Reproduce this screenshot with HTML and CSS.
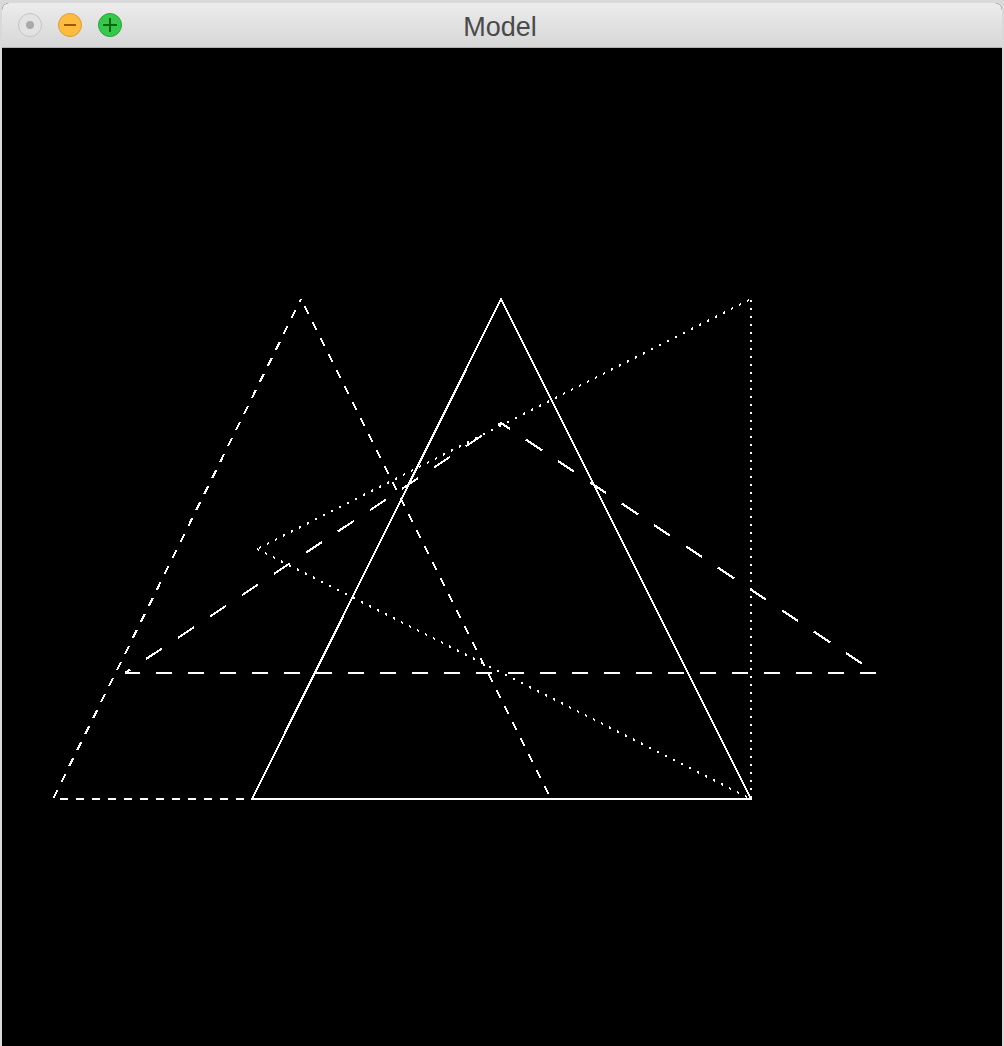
FILE: index.html
```html
<!DOCTYPE html>
<html lang="en">
<head>
<meta charset="utf-8">
<title>Model</title>
<link rel="stylesheet" href="styles.css">
</head>
<body>
<div class="window">
  <div class="titlebar">
    <div class="lights">
      <span class="light light-close">
        <svg viewBox="0 0 24 24" width="24" height="24"><circle cx="12" cy="12" r="4" fill="#a9a9a9"/></svg>
      </span>
      <span class="light light-min">
        <svg viewBox="0 0 24 24" width="24" height="24"><rect x="6" y="11" width="12" height="2" fill="#9a5a00"/></svg>
      </span>
      <span class="light light-max">
        <svg viewBox="0 0 24 24" width="24" height="24"><rect x="5" y="11" width="14" height="2" fill="#0d650f"/><rect x="11" y="5" width="2" height="14" fill="#0d650f"/></svg>
      </span>
    </div>
    <div class="title">Model</div>
    <div class="spacer"></div>
  </div>
  <div class="canvas">
    <svg class="scene" width="1000" height="998" viewBox="2 48 1000 998" shape-rendering="crispEdges">
      <g stroke="#ffffff" stroke-width="2" fill="none" stroke-linecap="butt">
        <!-- dash-dot triangle -->
        <line x1="53" y1="799" x2="301" y2="299" stroke-dasharray="8.93 8.93" stroke-dashoffset="-1.12"/>
        <line x1="301" y1="299" x2="551" y2="799" stroke-dasharray="8.944 8.944" stroke-dashoffset="-7.83"/>
        <line x1="53" y1="799" x2="551" y2="799" stroke-dasharray="8 8" stroke-dashoffset="-7"/>
        <!-- solid triangle -->
        <polygon points="252,799 501,299 751,799"/>
        <!-- dotted triangle -->
        <line x1="751" y1="299" x2="751" y2="799" stroke-dasharray="2 6" stroke-dashoffset="-1"/>
        <line x1="257" y1="549" x2="751" y2="299" stroke-dasharray="2.2416 6.7248" stroke-dashoffset="-2.24"/>
        <line x1="257" y1="549" x2="751" y2="799" stroke-dasharray="2.2416 6.7248" stroke-dashoffset="0"/>
        <!-- long-dash triangle -->
        <line x1="125" y1="673" x2="876" y2="673" stroke-dasharray="16 16" stroke-dashoffset="1"/>
        <line x1="125" y1="673" x2="501" y2="423" stroke-dasharray="19.214 19.214" stroke-dashoffset="-25.22"/>
        <line x1="501" y1="423" x2="876" y2="673" stroke-dasharray="19.23 19.23" stroke-dashoffset="-30.05"/>
      </g>
    </svg>
  </div>
</div>
</body>
</html>
```
FILE: styles.css
```css
html, body {
  margin: 0;
  padding: 0;
}

body {
  background: #d9d9d9;
  width: 1004px;
  height: 1046px;
  overflow: hidden;
  font-family: "Liberation Sans", Arial, sans-serif;
}

.window {
  margin: 3px 0 0 2px;
  width: 1000px;
  border-radius: 7px 7px 0 0;
  overflow: hidden;
  background: #000;
}

.titlebar {
  height: 44px;
  border-bottom: 1px solid #b3b3b3;
  background: linear-gradient(#ececec, #d7d7d7);
  display: grid;
  grid-template-columns: 1fr auto 1fr;
  align-items: center;
}

.lights {
  display: flex;
  gap: 16px;
  padding-left: 16px;
}

.light {
  width: 24px;
  height: 24px;
  box-sizing: border-box;
  border-radius: 50%;
  display: block;
}

.light svg {
  display: block;
  margin: -1px;
}

.light-close {
  background: #e3e3e3;
  border: 1px solid #c4c4c4;
}

.light-min {
  background: #fdbb3f;
  border: 1px solid #dd9f31;
}

.light-max {
  background: #35c84b;
  border: 1px solid #26a834;
}

.title {
  font-size: 27px;
  color: #4a4a4a;
  line-height: 40px;
  margin: 4px 4px 0 0;
}

.canvas {
  height: 998px;
  background: #000;
}

.scene {
  display: block;
}
```
